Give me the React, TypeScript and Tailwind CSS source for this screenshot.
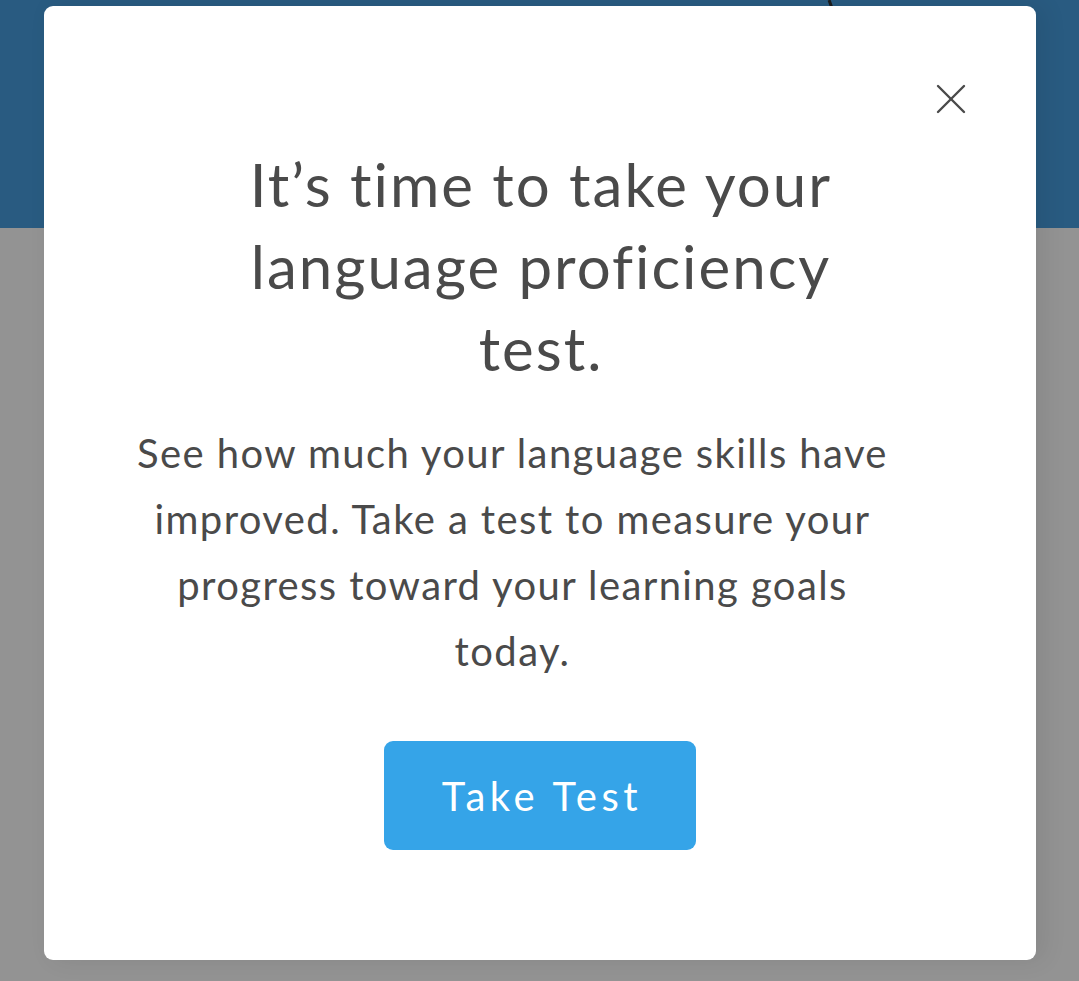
import React from 'react';

const CloseIcon = () => (
  <svg width="30" height="30" viewBox="0 0 30 30" fill="none" stroke="#4a4a4a" strokeWidth="2.4" strokeLinecap="round">
    <path d="M2 2 L28 28" />
    <path d="M28 2 L2 28" />
  </svg>
);

export default function App() {
  return (
    <div className="relative h-[981px] w-full overflow-hidden bg-[#939393]" style={{ fontFamily: 'Lato, "Noto Sans", sans-serif' }}>
      {/* page header behind the overlay */}
      <div className="relative h-[228px] bg-[#295b81]">
        <svg className="absolute left-[822px] top-0" width="20" height="12" viewBox="0 0 20 12" fill="none">
          <path d="M7 0 C9 4 10 7 10 12" stroke="#1c1c1c" strokeWidth="3" />
        </svg>
      </div>

      {/* Modal */}
      <div className="absolute left-[44px] top-[6px] flex h-[954px] w-[992px] flex-col items-center rounded-[9px] bg-white shadow-[8px_0_24px_rgba(0,0,0,0.08)]">
        <button className="absolute right-[70px] top-[78px] flex items-center justify-center">
          <CloseIcon />
        </button>

        <h2 className="mt-[137px] w-[680px] pl-[2px] text-center text-[60px] font-normal leading-[82px] tracking-[2px] text-[#4a4a4a]">
          It’s time to take your language proficiency test.
        </h2>

        <p className="mt-[31px] mr-[56px] w-[770px] pl-[1px] text-center text-[40px] leading-[66px] tracking-[1.4px] text-[#4a4a4a]">
          See how much your language skills have improved. Take a test to measure your progress toward your learning goals today.
        </p>

        <button className="mt-[57px] flex h-[109px] w-[312px] items-center justify-center rounded-[9px] bg-[#35a4e8] pl-[4px] text-[40px] tracking-[4.5px] text-white">
          Take Test
        </button>
      </div>
    </div>
  );
}
